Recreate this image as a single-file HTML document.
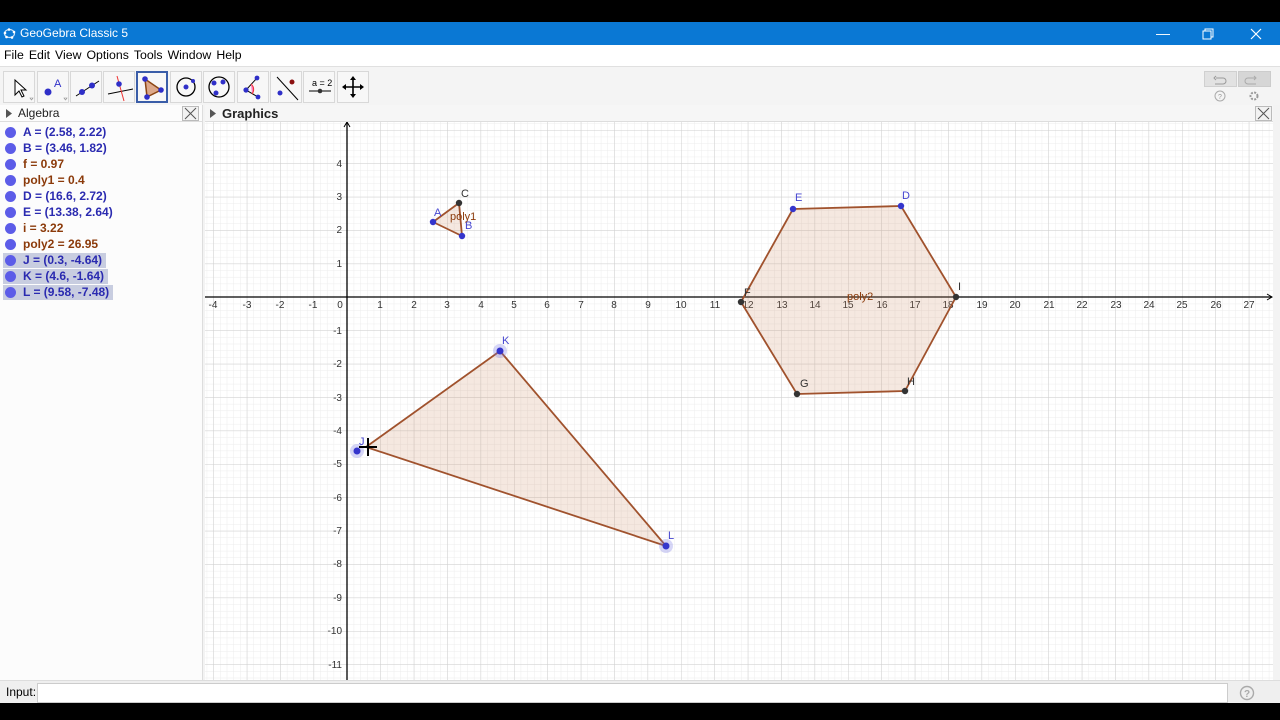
<!DOCTYPE html>
<html><head><meta charset="utf-8"><style>
*{margin:0;padding:0;box-sizing:border-box}
body{width:1280px;height:720px;overflow:hidden;background:#f3f3f3;font-family:"Liberation Sans",sans-serif;position:relative}
.abs{position:absolute}
#title{left:0;top:22px;width:1280px;height:23px;background:#0a78d4;color:#fff;font-size:12px;line-height:23px;padding-left:20px}
#menu{left:0;top:45px;width:1280px;height:21px;background:#fff;font-size:12.3px;line-height:21px;padding-left:4px;color:#000}
#menu span{margin-right:5px}
#tb{left:0;top:66px;width:1280px;height:39px;background:#f4f4f4;border-top:1px solid #e0e0e0}
.btn{position:absolute;top:4px;width:32px;height:32px;background:#f7f7f7;border:1px solid #d8d8d8}
.btn svg{position:absolute;left:0;top:0}
.sel{border:2px solid #3a5da8}
#alg{left:0;top:105px;width:203px;height:575px;background:#fcfcfc;border-right:1px solid #ddd}
.ph{height:17px;border-bottom:1px solid #ddd;font-size:12px;line-height:17px;color:#222}
.row{position:absolute;left:3px;height:15px;font-size:12px;font-weight:bold;line-height:15px;padding-left:20px;padding-right:4px}
.row:before{content:"";position:absolute;left:2px;top:2px;width:11px;height:11px;border-radius:50%;background:#5c5ce8}
.b{color:#2a2ab0}.r{color:#8b3a0a}.hl{background:#c8cde0}
#inp{left:0;top:680px;width:1280px;height:23px;background:#efefef;border-top:1px solid #ddd;font-size:12px;line-height:22px;padding-left:6px}
</style></head><body>
<div class="abs" style="left:0;top:0;width:1280px;height:22px;background:#000"></div>
<div class="abs" style="left:0;top:703px;width:1280px;height:17px;background:#000"></div>
<div id="title" class="abs"><svg class="abs" style="left:3px;top:5px" width="13" height="13"><g fill="none" stroke="#cfe4f7" stroke-width="1.2"><ellipse cx="6.5" cy="6.5" rx="5" ry="4"/></g><g fill="#fff"><circle cx="2" cy="6" r="1.3"/><circle cx="6" cy="2.5" r="1.3"/><circle cx="11" cy="5" r="1.3"/><circle cx="9" cy="10.5" r="1.3"/><circle cx="3.5" cy="10" r="1.3"/></g></svg>GeoGebra Classic 5
<span class="abs" style="left:1156px;top:0;font-size:14px">&#8212;</span>
<svg class="abs" style="left:1202px;top:6px" width="12" height="12"><rect x="1" y="3" width="8" height="8" fill="none" stroke="#fff"/><path d="M3 3V1h8v8H9" fill="none" stroke="#fff"/></svg>
<svg class="abs" style="left:1250px;top:6px" width="12" height="12"><path d="M1 1L11 11M11 1L1 11" stroke="#fff" stroke-width="1.2"/></svg>
</div>
<div id="menu" class="abs"><span>File</span><span>Edit</span><span>View</span><span>Options</span><span>Tools</span><span>Window</span><span>Help</span></div>
<div id="tb" class="abs">
<div class="btn" style="left:3px"><svg width="32" height="32"><path d="M11 8v15l4-4 3 6 2-1-3-6h5z" fill="#fff" stroke="#000"/><path d="M26 26l3 0-1.5 2z" fill="none" stroke="#888" stroke-width=".6"/></svg></div>
<div class="btn" style="left:37px"><svg width="32" height="32"><circle cx="10" cy="20" r="3.5" fill="#2f2fc8"/><text x="16" y="15" font-size="11" fill="#2f2fc8" font-family="Liberation Sans">A</text><path d="M26 26l3 0-1.5 2z" fill="none" stroke="#888" stroke-width=".6"/></svg></div>
<div class="btn" style="left:70px"><svg width="32" height="32"><path d="M5 24L28 9" stroke="#000"/><circle cx="11" cy="20" r="3" fill="#2f2fc8"/><circle cx="21" cy="13.5" r="3" fill="#2f2fc8"/></svg></div>
<div class="btn" style="left:103px"><svg width="32" height="32"><path d="M4 22L29 17" stroke="#000"/><path d="M13 4L20 29" stroke="#e33"/><circle cx="15" cy="12" r="2.8" fill="#2f2fc8"/></svg></div>
<div class="btn sel" style="left:136px"><svg width="30" height="30"><path d="M7 6L9 24 23 17z" fill="#dca88a" stroke="#8b4513" stroke-width="1.5"/><circle cx="7" cy="6" r="2.8" fill="#2f2fc8"/><circle cx="9" cy="24" r="2.8" fill="#2f2fc8"/><circle cx="23" cy="17" r="2.8" fill="#2f2fc8"/></svg></div>
<div class="btn" style="left:170px"><svg width="32" height="32"><circle cx="15" cy="15" r="9" fill="none" stroke="#000" stroke-width="1.3"/><circle cx="15" cy="15" r="2.5" fill="#2f2fc8"/><circle cx="22" cy="9" r="2" fill="#2f2fc8"/></svg></div>
<div class="btn" style="left:203px"><svg width="32" height="32"><circle cx="15" cy="15" r="10" fill="none" stroke="#000" stroke-width="1.3"/><circle cx="10" cy="11" r="2.5" fill="#2f2fc8"/><circle cx="19" cy="10" r="2.5" fill="#2f2fc8"/><circle cx="12" cy="21" r="2.5" fill="#2f2fc8"/></svg></div>
<div class="btn" style="left:237px"><svg width="32" height="32"><path d="M19 6L8 18 20 25" fill="none" stroke="#000"/><path d="M13 12a7 7 0 0 1 1 10" fill="#f7b" stroke="#e33"/><circle cx="8" cy="18" r="2.6" fill="#2f2fc8"/><circle cx="19" cy="6" r="2.4" fill="#2f2fc8"/><circle cx="20" cy="25" r="2.4" fill="#2f2fc8"/></svg></div>
<div class="btn" style="left:270px"><svg width="32" height="32"><path d="M6 5L27 28" stroke="#000"/><circle cx="21" cy="10" r="2.5" fill="#8b1010"/><circle cx="9" cy="21" r="2.5" fill="#2f2fc8"/></svg></div>
<div class="btn" style="left:303px"><svg width="32" height="32"><text x="8" y="14" font-size="9" font-family="Liberation Sans">a = 2</text><path d="M5 19H27" stroke="#000"/><circle cx="16" cy="19" r="2.3" fill="#333"/></svg></div>
<div class="btn" style="left:337px"><svg width="32" height="32"><path d="M15 6V24M6 15H24" stroke="#000" stroke-width="1.6"/><path d="M15 4l-3 4h6zM15 26l-3-4h6zM4 15l4-3v6zM26 15l-4-3v6z" fill="#000"/></svg></div>
<div class="abs" style="left:1204px;top:4px;width:33px;height:16px;background:#e2e2e2;border:1px solid #d0d0d0"></div>
<div class="abs" style="left:1238px;top:4px;width:33px;height:16px;background:#d6d6d6;border:1px solid #ccc"></div>
<svg class="abs" style="left:1210px;top:5px" width="60" height="34"><path d="M6 6h7a3 3 0 0 1 0 6H5M6 4l-2 2 2 2" fill="none" stroke="#999"/><path d="M45 6h-7a3 3 0 0 0 0 6h8M44 4l2 2-2 2" fill="none" stroke="#aaa"/><circle cx="10" cy="24" r="5" fill="none" stroke="#aaa"/><text x="8" y="27" font-size="7" fill="#999">?</text><circle cx="44" cy="24" r="3.5" fill="none" stroke="#999" stroke-width="2" stroke-dasharray="2 1.3"/></svg>
</div>
<div id="alg" class="abs"><div class="ph" style="padding-left:18px">Algebra</div>
<svg class="abs" style="left:5px;top:4px" width="8" height="9"><path d="M1 0L7 4.5 1 9z" fill="#555"/></svg>
<div class="abs" style="left:182px;top:1px;width:17px;height:15px;border:1px solid #bbb;background:#f2f2f2"><svg width="15" height="13"><path d="M2 1L13 12M13 1L2 12" stroke="#555"/></svg></div>
<div class="row b" style="top:20px">A = (2.58, 2.22)</div>
<div class="row b" style="top:36px">B = (3.46, 1.82)</div>
<div class="row r" style="top:52px">f = 0.97</div>
<div class="row r" style="top:68px">poly1 = 0.4</div>
<div class="row b" style="top:84px">D = (16.6, 2.72)</div>
<div class="row b" style="top:100px">E = (13.38, 2.64)</div>
<div class="row r" style="top:116px">i = 3.22</div>
<div class="row r" style="top:132px">poly2 = 26.95</div>
<div class="row b hl" style="top:148px">J = (0.3, -4.64)</div>
<div class="row b hl" style="top:164px">K = (4.6, -1.64)</div>
<div class="row b hl" style="top:180px">L = (9.58, -7.48)</div>
</div>
<div class="abs ph" style="left:205px;top:105px;width:1068px;background:#f6f6f6;padding-left:17px;font-weight:bold;font-size:13px">Graphics</div>
<svg class="abs" style="left:209px;top:109px" width="8" height="9"><path d="M1 0L7 4.5 1 9z" fill="#555"/></svg>
<div class="abs" style="left:1255px;top:106px;width:17px;height:15px;border:1px solid #bbb;background:#f2f2f2"><svg width="15" height="13"><path d="M2 1L13 12M13 1L2 12" stroke="#555"/></svg></div>
<svg class="abs" style="left:205px;top:122px" width="1068" height="558" font-family="Liberation Sans">
<defs>
<pattern id="mn" patternUnits="userSpaceOnUse" width="6.68" height="6.68" x="142" y="175"><path d="M0 0H6.68M0 0V6.68" stroke="#ececec" stroke-width="1" fill="none"/></pattern>
<pattern id="mj" patternUnits="userSpaceOnUse" width="33.4" height="33.4" x="142" y="175"><path d="M0 0H33.4M0 0V33.4" stroke="#cfcfcf" stroke-width="1" fill="none"/></pattern>
</defs>
<rect width="1068" height="558" fill="#fff"/>
<rect width="1068" height="558" fill="url(#mn)"/>
<rect width="1068" height="558" fill="url(#mj)"/>
<g transform="translate(-205,-122)">
<path d="M205 297H1272M347 122V680" stroke="#000" stroke-width="1.3"/>
<path d="M1267 294l5 3-5 3M344 127l3-5 3 5" fill="none" stroke="#000"/>
<g font-size="10" fill="#333" text-anchor="middle">
<text x="213" y="308">-4</text><text x="247" y="308">-3</text><text x="280" y="308">-2</text><text x="313" y="308">-1</text><text x="340" y="308">0</text>
<text x="380" y="308">1</text><text x="414" y="308">2</text><text x="447" y="308">3</text><text x="481" y="308">4</text><text x="514" y="308">5</text><text x="547" y="308">6</text><text x="581" y="308">7</text><text x="614" y="308">8</text><text x="648" y="308">9</text><text x="681" y="308">10</text><text x="715" y="308">11</text><text x="748" y="308">12</text><text x="782" y="308">13</text><text x="815" y="308">14</text><text x="848" y="308">15</text><text x="882" y="308">16</text><text x="915" y="308">17</text><text x="948" y="308">18</text><text x="982" y="308">19</text><text x="1015" y="308">20</text><text x="1049" y="308">21</text><text x="1082" y="308">22</text><text x="1116" y="308">23</text><text x="1149" y="308">24</text><text x="1182" y="308">25</text><text x="1216" y="308">26</text><text x="1249" y="308">27</text>
</g>
<g font-size="10" fill="#333" text-anchor="end">
<text x="342" y="167">4</text><text x="342" y="200">3</text><text x="342" y="233">2</text><text x="342" y="267">1</text>
<text x="342" y="334">-1</text><text x="342" y="367">-2</text><text x="342" y="401">-3</text><text x="342" y="434">-4</text><text x="342" y="467">-5</text><text x="342" y="501">-6</text><text x="342" y="534">-7</text><text x="342" y="567">-8</text><text x="342" y="601">-9</text><text x="342" y="634">-10</text><text x="342" y="668">-11</text>
</g>
<g fill="rgba(205,140,100,0.2)" stroke="#a0522d" stroke-width="1.8" stroke-linejoin="round">
<path d="M433 222L459 203 462 236z"/>
<path d="M741 302L793 209 901 206 956 297 905 391 797 394z"/>
<path d="M366 447L500 351 666 546z"/>
</g>
<g fill="rgba(120,120,230,0.3)"><circle cx="357" cy="451" r="7"/><circle cx="500" cy="351" r="7"/><circle cx="666" cy="546" r="7"/></g>
<g fill="#3535cc"><circle cx="433" cy="222" r="3.2"/><circle cx="462" cy="236" r="3.2"/><circle cx="793" cy="209" r="3.2"/><circle cx="901" cy="206" r="3.2"/><circle cx="357" cy="451" r="3.5"/><circle cx="500" cy="351" r="3.5"/><circle cx="666" cy="546" r="3.5"/></g>
<g fill="#333"><circle cx="459" cy="203" r="3.2"/><circle cx="741" cy="302" r="3.2"/><circle cx="797" cy="394" r="3.2"/><circle cx="905" cy="391" r="3.2"/><circle cx="956" cy="297" r="3.2"/></g>
<g font-size="11" fill="#4646d0"><text x="434" y="216">A</text><text x="465" y="229">B</text><text x="795" y="201">E</text><text x="902" y="199">D</text><text x="359" y="445">J</text><text x="502" y="344">K</text><text x="668" y="539">L</text></g>
<g font-size="11" fill="#333"><text x="461" y="197">C</text><text x="744" y="296">F</text><text x="800" y="387">G</text><text x="907" y="385">H</text><text x="958" y="290">I</text></g>
<g font-size="11" fill="#8b3a0a"><text x="450" y="220">poly1</text><text x="847" y="300">poly2</text></g>
<path d="M368 438V456M359 447H377" stroke="#000" stroke-width="2"/>
</g></svg>
<div id="inp" class="abs">Input:<div class="abs" style="left:37px;top:2px;width:1191px;height:20px;background:#fff;border:1px solid #ccc"></div>
<svg class="abs" style="left:1239px;top:4px" width="16" height="16"><circle cx="8" cy="8" r="6.5" fill="none" stroke="#aaa" stroke-width="1.4"/><text x="5" y="12" font-size="10" fill="#aaa" font-weight="bold">?</text></svg></div>
</body></html>
